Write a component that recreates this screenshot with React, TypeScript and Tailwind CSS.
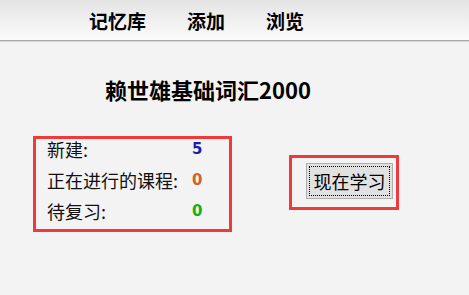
import React from "react";

const cjk = { fontFamily: '"Noto Sans CJK SC", "Noto Sans", sans-serif' };

export default function App() {
  return (
    <div className="w-[469px] h-[295px] bg-[#f3f3f3] overflow-hidden" style={cjk}>
      <div className="h-[40px] bg-gradient-to-b from-[#e4e4e4] to-[#fbfbfb] flex items-center pl-[89px] gap-[41px] text-[19px] font-bold text-black leading-none">
        <span>记忆库</span>
        <span>添加</span>
        <span>浏览</span>
      </div>
      <div className="h-px bg-[#a8a8a8]" />
      <div className="h-px bg-[#d8d8d8]" />
      <div className="mt-[32px] h-[30px] flex items-center pl-[105px] text-[22px] font-bold text-black leading-none">
        赖世雄基础词汇2000
      </div>
      <div className="mt-[32px] flex items-start pl-[33px]">
        <div className="w-[199px] h-[96px] border-[3px] border-[#f03a3a] pl-[11px] flex flex-col gap-[11px] text-[18px] text-[#111] leading-none">
          {[
            ["新建:", "5", "text-[#1e1eaa]"],
            ["正在进行的课程:", "0", "text-[#d0622a]"],
            ["待复习:", "0", "text-[#12b012]"],
          ].map(([label, n, c]) => (
            <div key={label} className="h-[20px] grid grid-cols-[145px_auto] items-center">
              <span>{label}</span>
              <span
                className={`font-bold text-[15px] ${c}`}
                style={{ fontFamily: '"DejaVu Sans", sans-serif' }}
              >
                {n}
              </span>
            </div>
          ))}
        </div>
        <div className="ml-[57px] mt-[19px] w-[110px] h-[55px] border-[3px] border-[#f03a3a] pl-[14px] pt-[5px]">
          <button className="w-[87px] h-[36px] bg-[#e1e1e1] border border-[#adadad] p-[2px]">
            <div className="w-full h-full border border-dotted border-black flex items-center justify-center text-[18px] text-black leading-none">
              现在学习
            </div>
          </button>
        </div>
      </div>
    </div>
  );
}
